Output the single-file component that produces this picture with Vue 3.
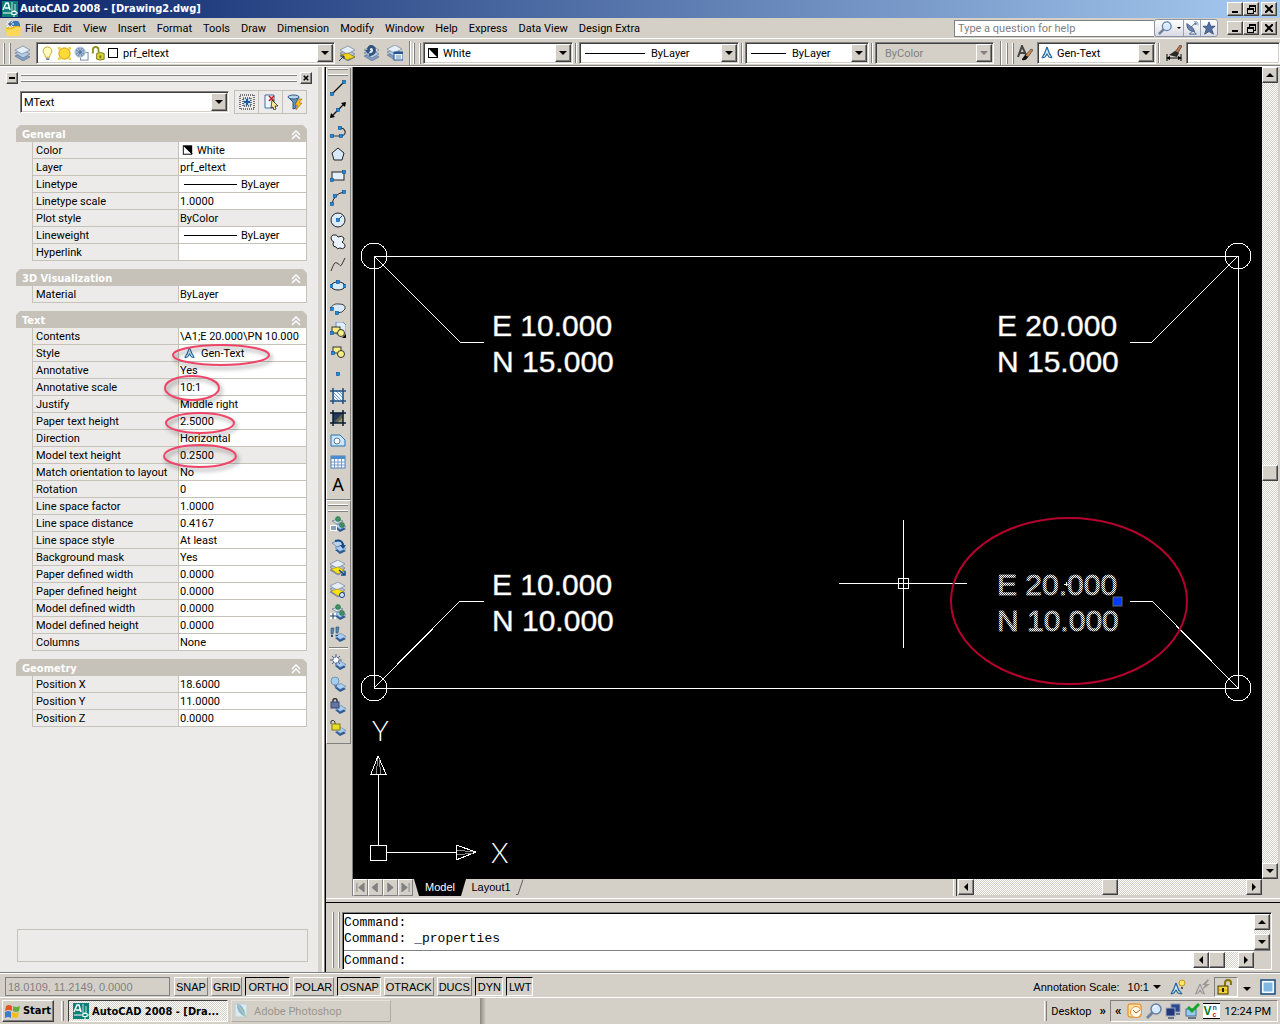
<script setup>
import { ref } from 'vue'

const sheets = (x = 0, y = 0) => `<g transform="translate(${x} ${y})" stroke="#5f7186" stroke-width=".6"><path d="M1 11l8-3 7 4-7 4z" fill="#7f9dc4"/><path d="M1 8l8-3 7 4-7 4z" fill="#b6cbe6"/><path d="M1 5l8-4 7 4-8 4z" fill="#e6eff9"/></g>`
const smallSheets = `<path d="M5 12l6-2 5 3-6 3z" fill="#2f5b94"/><path d="M5 9.500l6-2 5 3-6 3z" fill="#a9cdf3" stroke="#456d9d" stroke-width=".5"/>`
const ball = (x, y) => `<circle cx="${x}" cy="${y}" r="2.500" fill="#3f9160" stroke="#236340" stroke-width=".5"/>`
const dot = (x, y) => `<rect x="${x - 1.5}" y="${y - 1.5}" width="3" height="3" fill="#1b8ce0" stroke="#064b94" stroke-width=".6"/>`
const tri = (d, c = '#000') => `<path d="${d}" fill="${c}"/>`
const hashLines = '<path d="M3 0v16M13 0v16M0 3h16M0 13h16" stroke="#1d4f80" stroke-width="1.500" fill="none"/>'

const icons = {
  app: '<rect width="16" height="16" fill="#0d8076"/><path d="M1 9l3-7h2l2 7M3 7h4" stroke="#fff" stroke-width="1.500" fill="none"/><path d="M10 1v9M13 3v7" stroke="#bfe6df"/><path d="M1 12h8M12 9v7M9 12h7" stroke="#fff"/><rect x="10" y="10.500" width="4" height="3" fill="#0d8076" stroke="#fff"/>',
  file: '<path d="M5 1h8l2 3v7H5z" fill="#3c79b8"/><path d="M1 8l5-2h8l1 10H2z" fill="#f2b51d"/><path d="M1 9q6 1 8-1 3-2 7-1l-1 9H2z" fill="#ffd75a"/><path d="M5 0v8M1 4h8M2 1l6 6M8 1L2 7" stroke="#fff"/><path d="M5 2v4M3 4h4" stroke="#173e70"/>',
  layers: sheets(),
  bulb: '<path d="M8 1a4.500 4.500 0 0 1 3 8l-1 3H6l-1-3a4.500 4.500 0 0 1 3-8z" fill="#fffbc0" stroke="#c7a52c"/><path d="M6 13h4v2H7z" fill="#667b96"/>',
  sun: '<path d="M1 1h3v3H1zM12 1h3v3h-3zM1 12h3v3H1zM12 12h3v3h-3z" fill="#f4d545"/><circle cx="8" cy="8" r="6" fill="#ffda33" stroke="#c79616"/>',
  freeze: '<rect x="7" y="7" width="8" height="8" fill="#fff" stroke="#72879e"/><circle cx="6.500" cy="6.500" r="5.500" fill="#7896ba" stroke="#b8c8d8"/><path d="M6.500 1v11M1 6.500h11M3 3l7 7M10 3l-7 7" stroke="#d6e1ec" stroke-width=".8"/><circle cx="6.500" cy="6.500" r="2" fill="#55779f"/>',
  unlock: '<path d="M2 8V4q0-3 3-3t3 3v3" fill="none" stroke="#909322" stroke-width="2"/><path d="M6 8q4-2 8 0v6q-4 2-8 0z" fill="#dbd53c" stroke="#757817"/><path d="M9 10h2v3H9z" fill="#79751c"/>',
  layerPrev: sheets() + '<path d="M1 10l8-2 7 4-8 3z" fill="#f1d21c" stroke="#79680c" stroke-width=".6"/><path d="M0 16l5-5M2 11h3v3" stroke="#163668" fill="none"/>',
  layerBack: sheets() + '<path d="M6 10q7-1 5-7-4-4-6 2" fill="none" stroke="#31547f" stroke-width="3"/><path d="M2 5h6L5 9z" fill="#31547f"/>',
  layerState: sheets(-1, -1) + '<rect x="7" y="7" width="9" height="8" fill="#e8f3ff" stroke="#205995"/><path d="M7 8h9" stroke="#205995" stroke-width="2"/><path d="M9 11h5M9 13h5" stroke="#6f96bd"/>',
  swatch: '<rect x="3" y="3" width="10" height="10" fill="#000"/><path d="M4 4v8h8z" fill="#fff"/><path d="M5 4l8 8" stroke="#000"/>',
  textStyle: '<path d="M1 12L5 1l5 11M3 8h6" fill="none" stroke="#444" stroke-width="2"/><path d="M8 11l6-7 2 1-5 7z" fill="#ce8b50" stroke="#333" stroke-width=".6"/><path d="M5 14l3-4 3 2q-2 4-6 3z" fill="#111"/>',
  anno: '<path d="M8 3l3 8-3-2-3 2z" fill="#d6ecfb"/><path d="M8 2L5 10M8 2l3 8M3 13l3-1 2-3 2 3 3 1M3 13l2-4M13 13l-2-4" fill="none" stroke="#22679f" stroke-width="1.200"/>',
  dimStyle: '<path d="M1 9v7M15 9v7M2 13h12" stroke="#000"/><path d="M0 13l4-2v4zM16 13l-4-2v4z"/><path d="M9 7l5-7 2 1-4 7z" fill="#bd7145" stroke="#333" stroke-width=".6"/><path d="M3 10l6-4 4 2-2 4z" fill="#292929"/>',
  magnifier: '<path d="M7 9l-6 6" stroke="#72829c" stroke-width="3"/><circle cx="10" cy="6" r="5" fill="#d7e8ff" stroke="#6580aa" stroke-width="1.500"/><path d="M7 5q1-3 4-2" stroke="#fff" fill="none"/>',
  satellite: '<path d="M2 3q0 9 9 9L9 8 5 5z" fill="#6c82a9" stroke="#3f5c88"/><path d="M7 7l4-4M8 12l-3 3h8l-3-3" stroke="#3f5c88" fill="none"/><circle cx="12" cy="3" r="1.500" fill="#597bad"/><path d="M10 0q5 0 5 5" fill="none" stroke="#7890b8"/>',
  star: '<path d="M8 1l2 5h5l-4 3 2 6-5-3-5 3 2-6-4-3h5z" fill="#536d9e" stroke="#3b5380"/>',
  quick: '<rect x="1" y="1" width="14" height="14" fill="none" stroke="#000" stroke-dasharray="1 1"/><rect x="4" y="4" width="8" height="8" fill="#c0d9f0" stroke="#000" stroke-dasharray="1 1"/><path d="M8 5v6M5 8h6" stroke="#1c5ca0" stroke-width="2"/>',
  pick: '<path d="M2 1h9v13H2z" fill="#eef6ff" stroke="#40709d"/><path d="M6 2l5 5M11 2L6 7" stroke="#cc1720" stroke-width="1.500"/><path d="M9 6l6 6h-3l1 3-2 1-1-3-2 1z" fill="#ffe999" stroke="#111" stroke-width=".7"/>',
  filter: '<path d="M1 3h11L9 8v6l-3 1V8z" fill="#6592be" stroke="#285683"/><ellipse cx="6.500" cy="3" rx="5.500" ry="2" fill="#b8d5ec" stroke="#285683"/><path d="M12 5l-4 6h3l-2 5 6-7h-3l3-4z" fill="#ffc414" stroke="#9d6711" stroke-width=".6"/>',
  line: '<path d="M2 14L14 2" stroke="#111" stroke-width="1.200"/>' + dot(2, 14) + dot(14, 2),
  xline: '<path d="M1 15L15 1" stroke="#111" stroke-width="1.200"/>' + tri('M0 16l1-5 4 4zM16 0l-5 1 4 4z') + dot(8, 8),
  pline: '<path d="M2 12h9q5-1 4-5-1-3-5-3" stroke="#333" fill="none" stroke-width="1.200"/>' + dot(2, 12) + dot(11, 12) + dot(10, 4),
  polygon: '<path d="M8 2l6 5-2 7H4L2 7z" fill="#d8eafa" stroke="#222"/>',
  rect: '<rect x="2" y="4" width="12" height="8" fill="#e2f0ff" stroke="#222"/>' + dot(2, 12) + dot(14, 4),
  arc: '<path d="M2 15Q3 4 14 2" stroke="#222" fill="none"/>' + dot(2, 14) + dot(5, 6) + dot(14, 2),
  circle: '<circle cx="8" cy="8" r="7" fill="#dcecfb" stroke="#222"/><path d="M8 8l4-4" stroke="#064b94"/>' + dot(8, 8),
  cloud: '<path d="M3 1q4-1 5 2 4-2 6 1 0 3-2 4 4 2 3 5-2 3-5 1-3 2-4-1-3 0-3-3 0-1 1-2-3-1-3-4 0-2 2-3z" fill="#e9f1fb" stroke="#222"/>',
  spline: '<path d="M1 15C4 8 4 6 7 7s3 5 5 1l3-6" stroke="#333" fill="none"/>',
  ellipse: '<ellipse cx="8" cy="8" rx="7" ry="4" fill="#d9eaf8" stroke="#222"/>' + dot(1, 8) + dot(15, 8) + dot(8, 4),
  ellipseArc: '<path d="M1 9Q2 3 9 4q7 0 6 5-2 4-8 4" fill="#d9eaf8" stroke="#444"/>' + dot(2, 9) + dot(7, 13),
  insertBlock: '<path d="M6 0h7l3 3v9H6z" fill="#e0ecfa" stroke="#6b8db5"/><rect x="2" y="5" width="8" height="6" fill="#f7ef83" stroke="#333"/><circle cx="11" cy="11" r="3.500" fill="#f7ef83" stroke="#333"/><path d="M16 12v4h-4z"/>' + dot(2, 11),
  makeBlock: '<rect x="3" y="3" width="8" height="6" fill="#f7ef83" stroke="#333"/><circle cx="11" cy="10" r="3.500" fill="#f7ef83" stroke="#333"/>' + dot(3, 9),
  point: dot(8, 8),
  hatch: '<rect x="3" y="3" width="10" height="10" fill="#eef6ff"/><path d="M3 10l3 3M3 7l6 6M3 4l9 9M6 3l7 7M9 3l4 4" stroke="#438ac6" stroke-width=".8"/>' + hashLines,
  gradient: '<rect x="3" y="3" width="10" height="10" fill="#5d6552"/><path d="M3 3h10L3 13z" fill="#29395c"/><path d="M13 7v6H7z" fill="#a09a72"/>' + hashLines.replace('#1d4f80', '#081c34'),
  region: '<path d="M1 3h9l5 5v6H1z" fill="#cee5fa" stroke="#2470b1"/><circle cx="7" cy="9" r="3" fill="#fff" stroke="#557e9f"/>',
  table: '<rect x="1" y="2" width="14" height="12" fill="#fff" stroke="#4c7cb5"/><rect x="1" y="2" width="14" height="3" fill="#4c8ccd"/><path d="M1 8h14M1 11h14M4.500 5v9M8 5v9M11.500 5v9" stroke="#7599c7"/>',
  isolate: smallSheets + '<path d="M2 5l6-2 5 2-6 3z" fill="#cfe0ef" stroke="#456" stroke-width=".5"/>' + ball(8, 3) + ball(12, 9) + '<path d="M0 9h7v6H0z" fill="#fff"/><path d="M1 11h5M1 13h5" stroke="#133c78"/>',
  turnLayer: smallSheets + '<path d="M2 5l7-3 5 4-7 3z" fill="#b8d2ef" stroke="#456" stroke-width=".5"/><path d="M5 3q8-2 8 5" fill="none" stroke="#164a85" stroke-width="2"/><path d="M10 7h6l-3 4z" fill="#164a85"/>',
  copyLayer: sheets(-1, -1) + '<path d="M1 9l7-2 6 3-6 4z" fill="#ffe211" stroke="#8a790c" stroke-width=".5"/><path d="M9 10l6 5M15 11v4h-4" stroke="#144b8a" stroke-width="1.500" fill="none"/>',
  matchLayer: sheets(-1, -1) + '<path d="M1 9l7-2 6 3-6 4z" fill="#ffe211" stroke="#8a790c" stroke-width=".5"/><circle cx="12" cy="13" r="2.500" fill="#d7e9ff" stroke="#173d75"/>',
  addLayer: smallSheets + '<path d="M2 5l6-2 5 2-6 3z" fill="#cfe0ef" stroke="#456" stroke-width=".5"/>' + ball(8, 3) + ball(12, 9) + '<path d="M0 9h6v6H0z" fill="#fff"/><path d="M3 9v6M0 12h6" stroke="#133c78"/>',
  walk: smallSheets + '<path d="M1 2h3l-1 6H1zM6 1h3l-1 6H6z" fill="#5c88ad" stroke="#234e75" stroke-width=".6"/><path d="M1 9h2v2H1zM6 9h2v1H6z" fill="#234e75"/>',
  frost: smallSheets + '<path d="M6 0v12M0 6h12M2 2l8 8M10 2l-8 8" stroke="#48658c"/><circle cx="6" cy="6" r="3" fill="#fff" stroke="#48658c" stroke-dasharray="2 1"/>',
  off: smallSheets + '<circle cx="5" cy="5" r="4" fill="#a7cdeb" stroke="#6d96b9"/><path d="M4 9h3v3H5z" fill="#587c9d"/>',
  lock: smallSheets + '<path d="M3 5V2q2-3 4 0v3" fill="none" stroke="#333" stroke-width="1.500"/><rect x="1" y="4" width="8" height="6" fill="#6575a3" stroke="#3b4772"/>',
  unlocked: smallSheets + '<path d="M1 4V1q3-2 4 1v3" fill="none" stroke="#333"/><rect x="2" y="4" width="8" height="6" fill="#e7df27" stroke="#817a13"/>',
  annoVis: '<path d="M6 5l4 9-4-3-4 3z" fill="#d6ecfb"/><path d="M6 4L3 12M6 4l3 8M1 15l3-1 2-3 2 3 4 1M1 15l2-4M12 15l-3-4" fill="none" stroke="#22679f" stroke-width="1.200"/><circle cx="12" cy="4" r="3" fill="#ffe66b" stroke="#c79616"/><path d="M11 8h2v2h-2z" fill="#555"/>',
  annoAuto: '<path d="M6 5L2 14M6 5l4 9M1 15l3-1 2-3 2 3 3 1" fill="none" stroke="#999" stroke-width="1.200"/><path d="M14 0L8 6h3l-3 5 8-6h-4l3-4z" fill="#999"/>',
  padlock: '<path d="M8 7V4q0-3 3-3t3 3v2" fill="none" stroke="#8a7400" stroke-width="2"/><rect x="1" y="7" width="10" height="8" fill="#e0bd18" stroke="#4c4000"/><path d="M2 9h8M2 13h8" stroke="#fff17a"/><path d="M5 9h2v4H5z" fill="#222"/>',
  clean: '<rect x="1" y="1" width="14" height="14" fill="#eaf6ff" stroke="#164a82" stroke-width="1.500"/><rect x="3" y="3" width="10" height="10" fill="#7fb8e3" stroke="#fff"/>',
  windows: '<path d="M1 3q3-2 6 0v5Q4 6 0 8z" fill="#e85422"/><path d="M8 3q3 2 7 0l-1 5q-3 2-6 0z" fill="#61b136"/><path d="M0 9q4-2 6 0v6q-3-2-6 0z" fill="#3f79d2"/><path d="M7 9q4 2 7 0l-1 5q-3 2-6 0z" fill="#f3bd22"/>',
  feather: '<rect x="1" y="1" width="12" height="13" fill="#dce9ee" stroke="#c0ccd0"/><path d="M3 1q7 0 9 13Q2 10 3 1z" fill="#8ab8cf"/><path d="M4 2l9 13" stroke="#b9d495"/>',
  clock: '<rect x="1" y="1" width="13" height="13" rx="2" fill="#ffe3a4" stroke="#e17e13"/><circle cx="9" cy="9" r="5.500" fill="#fff9e8" stroke="#e9902f"/><path d="M6 7l3 3 4-3" fill="none" stroke="#ac6424"/>',
  monitors: '<rect x="6" y="1" width="9" height="8" fill="#2d468e" stroke="#8c9bb8"/><rect x="1" y="5" width="9" height="8" fill="#20377b" stroke="#9faabe"/><path d="M3 15h6M11 11h4" stroke="#6b758a" stroke-width="2"/>',
  safe: '<rect x="2" y="6" width="10" height="7" fill="#9ccbf1" stroke="#456b91"/><path d="M4 15h8" stroke="#67758a" stroke-width="2"/><path d="M4 4l4 4 7-7" stroke="#16a62c" stroke-width="3" fill="none"/>',
}

const menus = ['File', 'Edit', 'View', 'Insert', 'Format', 'Tools', 'Draw', 'Dimension', 'Modify', 'Window', 'Help', 'Express', 'Data View', 'Design Extra']
const drawTools = ['line', 'xline', 'pline', 'polygon', 'rect', 'arc', 'circle', 'cloud', 'spline', 'ellipse', 'ellipseArc', 'insertBlock', 'makeBlock', 'point', 'hatch', 'gradient', 'region', 'table']
const layerTools = ['isolate', 'turnLayer', 'copyLayer', 'matchLayer', 'addLayer', 'walk']
const layerTools2 = ['frost', 'off', 'lock', 'unlocked']
const sections = [
  { title: 'General', rows: [['Color', 'White', 'swatch'], ['Layer', 'prf_eltext'], ['Linetype', 'ByLayer', 'line'], ['Linetype scale', '1.0000'], ['Plot style', 'ByColor', 'locked'], ['Lineweight', 'ByLayer', 'line'], ['Hyperlink', '']] },
  { title: '3D Visualization', rows: [['Material', 'ByLayer']] },
  { title: 'Text', rows: [['Contents', '\\A1;E 20.000\\PN 10.000'], ['Style', 'Gen-Text', 'anno'], ['Annotative', 'Yes'], ['Annotative scale', '10:1'], ['Justify', 'Middle right'], ['Paper text height', '2.5000'], ['Direction', 'Horizontal'], ['Model text height', '0.2500', 'locked'], ['Match orientation to layout', 'No'], ['Rotation', '0'], ['Line space factor', '1.0000'], ['Line space distance', '0.4167'], ['Line space style', 'At least'], ['Background mask', 'Yes'], ['Paper defined width', '0.0000'], ['Paper defined height', '0.0000'], ['Model defined width', '0.0000'], ['Model defined height', '0.0000'], ['Columns', 'None']] },
  { title: 'Geometry', rows: [['Position X', '18.6000'], ['Position Y', '11.0000'], ['Position Z', '0.0000']] },
]
const modes = [['SNAP', 0], ['GRID', 0], ['ORTHO', 1], ['POLAR', 0], ['OSNAP', 1], ['OTRACK', 0], ['DUCS', 0], ['DYN', 1], ['LWT', 1]]
const question = ref('')
const command = ref('')
</script>

<template>
  <div class="app">
    <header class="title">
      <svg class="ic" viewBox="0 0 16 16" v-html="icons.app" />
      <h1>AutoCAD 2008 - [Drawing2.dwg]</h1>
      <div class="winbtns">
        <button class="btn" aria-label="Minimize"><i class="min" /></button>
        <button class="btn" aria-label="Restore"><svg class="restore" viewBox="0 0 10 10"><path d="M3 4V1H9V7H7M3 1H9M1 4H7V9H1ZM1 5H7M3 2H9" /></svg></button>
        <button class="btn close" aria-label="Close"><svg viewBox="0 0 8 8"><path d="M0 0l8 8M8 0L0 8" /></svg></button>
      </div>
    </header>

    <nav class="menu">
      <svg class="ic" viewBox="0 0 16 16" v-html="icons.file" />
      <a v-for="m in menus" :key="m" href="#">{{ m }}</a>
      <input v-model="question" class="help" aria-label="Help search" placeholder="Type a question for help">
      <div class="helpbtns">
        <button class="wide" aria-label="Search"><svg class="ic" viewBox="0 0 16 16" v-html="icons.magnifier" /><i class="down small" /></button>
        <button aria-label="Communication Center"><svg class="ic" viewBox="0 0 16 16" v-html="icons.satellite" /></button>
        <button aria-label="Favorites"><svg class="ic" viewBox="0 0 16 16" v-html="icons.star" /></button>
      </div>
      <div class="winbtns">
        <button class="btn" aria-label="Minimize drawing"><i class="min" /></button>
        <button class="btn" aria-label="Restore drawing"><svg class="restore" viewBox="0 0 10 10"><path d="M3 4V1H9V7H7M3 1H9M1 4H7V9H1ZM1 5H7M3 2H9" /></svg></button>
        <button class="btn close" aria-label="Close drawing"><svg viewBox="0 0 8 8"><path d="M0 0l8 8M8 0L0 8" /></svg></button>
      </div>
    </nav>

    <div class="toolbar">
      <i class="grip" />
      <button class="tool" aria-label="Layer Properties"><svg class="ic" viewBox="0 0 16 16" v-html="icons.layers" /></button>
      <div class="combo layer">
        <svg v-for="n in ['bulb', 'sun', 'freeze', 'unlock']" :key="n" class="ic" viewBox="0 0 16 16" v-html="icons[n]" />
        <i class="box" />
        <select aria-label="Layer"><option>prf_eltext</option></select>
        <span class="btn arrow"><i class="down" /></span>
      </div>
      <button v-for="n in ['layerPrev', 'layerBack', 'layerState']" :key="n" class="tool" :aria-label="n"><svg class="ic" viewBox="0 0 16 16" v-html="icons[n]" /></button>
      <i class="brk" /><i class="grip" />
      <div class="combo color">
        <svg class="ic" viewBox="0 0 16 16" v-html="icons.swatch" />
        <select aria-label="Color"><option>White</option></select>
        <span class="btn arrow"><i class="down" /></span>
      </div>
      <i class="sep" />
      <div class="combo ltype">
        <i class="rule" />
        <select aria-label="Linetype"><option>ByLayer</option></select>
        <span class="btn arrow"><i class="down" /></span>
      </div>
      <i class="sep" />
      <div class="combo lweight">
        <i class="rule short" />
        <select aria-label="Lineweight"><option>ByLayer</option></select>
        <span class="btn arrow"><i class="down" /></span>
      </div>
      <i class="sep" />
      <div class="combo plot off">
        <select aria-label="Plot style" disabled><option>ByColor</option></select>
        <span class="btn arrow"><i class="down" /></span>
      </div>
      <i class="brk wide" /><i class="grip" />
      <button class="tool" aria-label="Text style"><svg class="ic" viewBox="0 0 16 16" v-html="icons.textStyle" /></button>
      <div class="combo tstyle">
        <svg class="ic" viewBox="0 0 16 16" v-html="icons.anno" />
        <select aria-label="Text style"><option>Gen-Text</option></select>
        <span class="btn arrow"><i class="down" /></span>
      </div>
      <i class="sep" />
      <button class="tool" aria-label="Dimension style"><svg class="ic" viewBox="0 0 16 16" v-html="icons.dimStyle" /></button>
      <div class="combo rest"><select aria-label="Dimension style"><option /></select></div>
    </div>

    <main>
      <aside class="props">
        <div class="props-in">
          <div class="cap">
            <button class="btn" aria-label="Minimize palette"><i class="dash" /></button>
            <i class="bars" />
            <button class="btn close" aria-label="Close palette"><svg viewBox="0 0 8 8"><path d="M1 1l6 6M7 1L1 7" /></svg></button>
          </div>
          <div class="picker">
            <div class="combo obj">
              <select aria-label="Object type"><option>MText</option></select>
              <span class="btn arrow"><i class="down" /></span>
            </div>
            <div class="pick">
              <button v-for="n in ['quick', 'pick', 'filter']" :key="n" :aria-label="n"><svg class="ic" viewBox="0 0 16 16" v-html="icons[n]" /></button>
            </div>
          </div>
          <section v-for="s in sections" :key="s.title">
            <h2>{{ s.title }}
              <svg class="chev" viewBox="0 0 10 10"><path d="M1 5l4-4 4 4M1 9l4-4 4 4" /></svg>
            </h2>
            <table>
              <tbody>
                <tr v-for="[k, v, kind] in s.rows" :key="k">
                  <th scope="row">{{ k }}</th>
                  <td :class="kind">
                    <div>
                      <svg v-if="kind === 'swatch' || kind === 'anno'" class="ic" viewBox="0 0 16 16" v-html="icons[kind]" />
                      <i v-if="kind === 'line'" class="rule" />
                      <span>{{ v }}</span>
                    </div>
                  </td>
                </tr>
              </tbody>
            </table>
            <svg v-if="s.title === 'Text'" class="marks" viewBox="0 0 292 180">
              <ellipse cx="205" cy="44" rx="48" ry="10" />
              <ellipse cx="176" cy="77" rx="27" ry="12" />
              <ellipse cx="184" cy="112" rx="34" ry="10" />
              <ellipse cx="184" cy="145" rx="36" ry="11" />
            </svg>
          </section>
          <div class="desc" />
        </div>
      </aside>

      <div class="work">
        <div class="upper">
          <div class="tools">
            <div class="strip">
              <i class="hgrip" />
              <button v-for="n in drawTools" :key="n" :aria-label="n"><svg class="ic" viewBox="0 0 16 16" v-html="icons[n]" /></button>
              <button class="mtext">A</button>
            </div>
            <div class="strip second">
              <i class="hgrip" />
              <button v-for="n in layerTools" :key="n" :aria-label="n"><svg class="ic" viewBox="0 0 16 16" v-html="icons[n]" /></button>
              <i class="hsep" />
              <button v-for="n in layerTools2" :key="n" :aria-label="n"><svg class="ic" viewBox="0 0 16 16" v-html="icons[n]" /></button>
            </div>
          </div>
          <div class="doc">
            <div class="view">
              <svg class="canvas">
                <defs>
                  <pattern id="dither" width="2" height="2" patternUnits="userSpaceOnUse">
                    <rect width="2" height="2" fill="#444" />
                    <rect width="1" height="1" fill="#fff" /><rect x="1" y="1" width="1" height="1" fill="#fff" />
                  </pattern>
                </defs>
                <g class="wire">
                  <path d="M21 189H885V621H21Z" />
                  <path d="M21 189L107 275H131M885 189L799 275H777M21 621L107 534H131M885 621L799 534H777" />
                  <circle cx="21" cy="189" r="13" /><circle cx="885" cy="189" r="13" />
                  <circle cx="21" cy="621" r="13" /><circle cx="885" cy="621" r="13" />
                  <path d="M486 516H614M550 453V581M545 511H555V521H545Z" />
                  <path d="M17 778H33V793H17ZM25 778V707M18 707L25 689L33 707ZM33 785H103M103 778L123 785L103 793Z" />
                  <path class="faint" d="M23 707L25 692M28 707L26 692M104 783L120 785M104 788L120 786" />
                  <path d="M711 517H715M713 515V519" />
                </g>
                <g class="label">
                  <text x="139" y="269">E 10.000</text><text x="139" y="305">N 15.000</text>
                  <text x="644" y="269">E 20.000</text><text x="644" y="305">N 15.000</text>
                  <text x="139" y="528">E 10.000</text><text x="139" y="564">N 10.000</text>
                  <text class="sel" x="644" y="528">E 20.000</text><text class="sel" x="644" y="564">N 10.000</text>
                </g>
                <text class="axis" x="19" y="674">Y</text>
                <text class="axis" x="138" y="796">X</text>
                <ellipse class="halo" cx="716" cy="534" rx="118" ry="83" />
                <rect class="knob" x="760" y="530" width="9" height="9" />
              </svg>
              <div class="vs">
                <button class="btn" aria-label="Scroll up"><i class="up" /></button>
                <i class="btn thumb" />
                <button class="btn" aria-label="Scroll down"><i class="down" /></button>
              </div>
            </div>
            <div class="tabs">
              <button v-for="(d, i) in ['M1 0v10M9 0v10L3 5z', 'M7 0v10L1 5z', 'M2 0v10l6-5z', 'M9 0v10M1 0v10l6-5z']" :key="i" class="nav" :aria-label="'Tab scroll ' + (i + 1)"><svg viewBox="0 0 10 10"><path :d="d" /></svg></button>
              <button class="tab on">Model</button>
              <button class="tab">Layout1</button>
              <svg class="slash" viewBox="0 0 8 16"><path d="M7 0L2 15H0" /></svg>
              <i class="split" />
              <div class="hs">
                <button class="btn" aria-label="Scroll left"><i class="left" /></button>
                <i class="btn thumb" />
                <button class="btn" aria-label="Scroll right"><i class="right" /></button>
              </div>
            </div>
          </div>
        </div>

        <div class="cmd">
          <i class="grip" />
          <div class="cmdbox">
            <div class="hist">
              <pre>Command:
Command: _properties</pre>
              <div class="vs">
                <button class="btn" aria-label="History up"><i class="up" /></button>
                <button class="btn" aria-label="History down"><i class="down" /></button>
              </div>
            </div>
            <div class="entry">
              <label for="cmdline">Command:</label>
              <input id="cmdline" v-model="command">
              <div class="hs">
                <button class="btn" aria-label="Command left"><i class="left" /></button>
                <i class="btn thumb" />
                <button class="btn" aria-label="Command right"><i class="right" /></button>
              </div>
            </div>
          </div>
        </div>
      </div>
    </main>

    <footer class="status">
      <output class="coords">18.0109, 11.2149, 0.0000</output>
      <button v-for="[m, on] in modes" :key="m" class="mode" :class="{ on }">{{ m }}</button>
      <span class="scale">Annotation Scale:</span>
      <button class="plain">10:1 <i class="down" /></button>
      <svg class="ic vis" viewBox="0 0 16 16" v-html="icons.annoVis" />
      <svg class="ic auto" viewBox="0 0 16 16" v-html="icons.annoAuto" />
      <button class="lockbtn" aria-label="Toolbar lock"><svg class="ic" viewBox="0 0 16 16" v-html="icons.padlock" /></button>
      <i class="down tray-arrow" />
      <svg class="ic" viewBox="0 0 16 16" v-html="icons.clean" />
    </footer>

    <footer class="taskbar">
      <button class="btn start"><svg class="ic" viewBox="0 0 16 16" v-html="icons.windows" />Start</button>
      <i class="tgrip" />
      <button class="task active"><svg class="ic" viewBox="0 0 16 16" v-html="icons.app" /><span>AutoCAD 2008 - [Dra...</span></button>
      <button class="task ghost"><svg class="ic" viewBox="0 0 16 16" v-html="icons.feather" /><span>Adobe Photoshop</span></button>
      <i class="edge" />
      <i class="tgrip end" />
      <span class="desk">Desktop</span>
      <b class="more">»</b>
      <div class="tray">
        <b>«</b>
        <svg v-for="n in ['clock', 'magnifier', 'monitors', 'safe']" :key="n" class="ic" viewBox="0 0 16 16" v-html="icons[n]" />
        <span class="vnc"><b>V</b><small><em>n</em><em>c</em></small></span>
        <time>12:24 PM</time>
      </div>
    </footer>
  </div>
</template>

<style>
body { margin: 0; background: #d4d0c8; }
</style>

<style scoped>
* { box-sizing: border-box; }
.app {
  --face: #d4d0c8;
  --ui: Roboto, "Noto Sans", sans-serif;
  --sys: "Liberation Sans", Arial, sans-serif;
  display: flex; flex-direction: column; min-height: 100vh;
  background: var(--face); color: #000; font: 11px/14px var(--ui); overflow: hidden;
}
button, input, select { font: inherit; color: inherit; margin: 0; padding: 0; border: 0; background: none; border-radius: 0; }
i, em { font-style: normal; }
.ic { width: 16px; height: 16px; flex: none; display: block; }
.btn {
  display: flex; align-items: center; justify-content: center; flex: none;
  width: 16px; height: 16px; background: var(--face);
  border: 1px solid; border-color: #fff #404040 #404040 #fff;
  box-shadow: inset -1px -1px #808080;
}
.down, .up, .left, .right { width: 0; height: 0; border: 4px solid transparent; flex: none; }
.down { border-top-color: #000; border-bottom: 0; }
.up { border-bottom-color: #000; border-top: 0; }
.left { border-right-color: #000; border-left: 0; }
.right { border-left-color: #000; border-right: 0; }
.down.small { border-width: 2px 2px 0; }

.title { display: flex; align-items: center; height: 18px; padding: 0 3px 0 2px; background: linear-gradient(90deg, #0a246a, #a6caf0); color: #fff; }
.title h1 { flex: 1; margin: 0 0 0 2px; font: bold 11px/18px "DejaVu Sans Condensed", var(--ui); white-space: nowrap; }
.winbtns { display: flex; flex: none; }
.winbtns .btn { height: 14px; }
.winbtns .close { margin-left: 2px; }
.close svg { width: 8px; height: 8px; }
.close path { stroke: #000; stroke-width: 2; fill: none; }
.min { width: 6px; height: 8px; border-bottom: 2px solid #000; }
.restore { width: 10px; height: 10px; flex: none; shape-rendering: crispEdges; }
.restore path { fill: none; stroke: #000; }

.menu { display: flex; align-items: center; height: 20px; padding: 0 3px 0 5px; gap: 11px; white-space: nowrap; }
.menu .ic { margin-right: -7px; }
.menu a { color: #000; text-decoration: none; padding-top: 2px; }
.help { flex: none; width: 200px; height: 17px; margin-left: auto; padding: 1px 3px 0; background: #fff; border: 1px solid #808080; border-right: 0; }
.help::placeholder { color: #808080; opacity: 1; }
.helpbtns { display: flex; margin: 0 -2px 0 -11px; height: 18px; border: 1px solid #8b93a5; border-radius: 3px; background: linear-gradient(#fff, #d8dbe4); }
.helpbtns button { display: flex; align-items: center; justify-content: center; width: 17px; }
.helpbtns button + button { border-left: 1px solid #9aa1b0; }
.helpbtns .wide { width: 28px; gap: 5px; }
.helpbtns .ic { width: 14px; height: 14px; margin: 0; }

.toolbar { display: flex; align-items: center; height: 28px; padding: 2px 0 0 3px; border-top: 1px solid #fff; border-bottom: 1px solid #808080; white-space: nowrap; }
.grip { flex: none; width: 7px; height: 21px; border: solid #fff; border-width: 0 1px; box-shadow: 1px 0 #808080, inset 1px 0 #808080; }
.tool { flex: none; display: flex; align-items: center; justify-content: center; width: 24px; height: 22px; }
.brk { flex: none; align-self: stretch; width: 2px; margin: 0 2px; border-left: 1px solid #808080; background: #fff; }
.brk.wide { margin: 0 4px 0 6px; }
.sep { flex: none; width: 2px; height: 20px; margin: 0 2px; border-left: 1px solid #808080; background: #fff; }
.combo { display: flex; align-items: center; flex: none; height: 22px; padding: 1px; background: #fff; border: 1px solid; border-color: #808080 #fff #fff #808080; box-shadow: inset 1px 1px #404040, inset -1px -1px var(--face); }
.combo select { appearance: none; flex: 1; min-width: 0; height: 18px; line-height: 16px; padding: 2px 0 0 2px; opacity: 1; }
.combo .arrow { align-self: stretch; height: auto; pointer-events: none; }
.combo .box { width: 10px; height: 10px; border: 1px solid #000; margin-right: 3px; }
.combo.layer { width: 299px; padding-left: 3px; margin-left: 2px; }
.combo.layer .ic { margin-right: 2px; width: 15px; height: 15px; }
.combo.color { width: 150px; margin-left: 3px; }
.combo.ltype { width: 160px; }
.combo.lweight { width: 124px; }
.combo.plot { width: 119px; background: var(--face); color: #808080; }
.combo.plot select { padding-left: 8px; }
.combo.plot .down { border-top-color: #808080; }
.combo.tstyle { width: 119px; }
.combo.rest { flex: 1; }
.rule { flex: none; width: 60px; height: 1px; margin: 0 4px; background: #000; }
.rule.short { width: 35px; }

main { flex: 1; display: flex; min-height: 0; border-top: 1px solid #fff; }
.props { flex: none; width: 326px; padding-right: 4px; border-right: 1px solid #000; box-shadow: inset -1px 0 #808080, inset -3px 0 #fff; background: var(--face); }
.props-in { display: flex; flex-direction: column; height: 100%; width: 318px; padding: 5px 11px 10px 16px; background: #ecebe9; }
.cap { display: flex; align-items: center; margin: 0 -5px 0 -10px; gap: 3px; height: 11px; }
.cap .btn { width: 12px; height: 12px; }
.cap svg { width: 6px; height: 6px; }
.bars { flex: 1; height: 7px; border: solid #fff; border-width: 1px 0; box-shadow: 0 1px #808080, inset 0 1px #808080; }
.dash { width: 6px; height: 2px; background: #000; }
.picker { display: flex; align-items: center; margin: 7px 0 11px; }
.combo.obj { width: 209px; margin-left: 4px; }
.pick { display: flex; margin-left: auto; border: 1px solid #c4c0b8; }
.pick button { display: flex; align-items: center; justify-content: center; width: 24px; height: 22px; }
.pick button:first-child { width: 23px; }
.pick button + button { border-left: 1px solid #c4c0b8; }
.props section { position: relative; margin-bottom: 8px; }
.props h2 { display: flex; justify-content: space-between; align-items: center; height: 17px; margin: 0; padding: 3px 6px 0; background: #c6c2ba; color: #fff; font: bold 11px/14px "DejaVu Sans Condensed", var(--ui); clip-path: polygon(0 4px, 4px 0, calc(100% - 4px) 0, 100% 4px, 100% 100%, 0 100%); }
.chev { width: 10px; height: 10px; }
.chev path { fill: none; stroke: #fff; stroke-width: 1.500; }
table { width: calc(100% - 16px); margin-left: 16px; border-spacing: 0; table-layout: fixed; border-left: 1px solid #c6c2ba; border-right: 1px solid #c6c2ba; }
th, td { height: 17px; padding: 0; border-bottom: 1px solid #c6c2ba; font-weight: 400; text-align: left; line-height: 14px; white-space: nowrap; }
th { width: 145px; padding: 2px 0 0 3px; }
td { border-left: 1px solid #c6c2ba; background: #fff; overflow: hidden; }
td > div { display: flex; align-items: center; height: 16px; padding-left: 1px; }
td span { padding-top: 2px; }
td.locked { background: #ecebe9; }
td .rule { width: 53px; }
td .ic { width: 15px; margin-right: 2px; }
td.anno .ic { margin: 0 4px 0 2px; }
.marks { position: absolute; left: 0; top: 0; width: 292px; height: 180px; pointer-events: none; filter: drop-shadow(2px 3px 2px #0006); }
.marks ellipse { fill: none; stroke: #ee4468; stroke-width: 2; }
.desc { height: 33px; margin: auto -1px 0 1px; border: 1px solid #c6c2ba; }

.work { flex: 1; min-width: 0; display: flex; flex-direction: column; }
.upper { flex: 1; display: flex; min-height: 0; padding-bottom: 2px; }
.tools { flex: none; width: 27px; border-right: 1px solid #808080; }
.strip { width: 25px; padding-bottom: 4px; border-right: 1px solid #808080; border-bottom: 1px solid #808080; border-left: 1px solid #fff; }
.strip.second { border-top: 1px solid #fff; padding-top: 2px; }
.strip button { display: flex; align-items: center; justify-content: center; width: 22px; height: 22px; }
.hgrip { display: block; width: 20px; height: 7px; margin: 1px 1px 2px; border: solid #fff; border-width: 1px 0; box-shadow: 0 1px #808080, inset 0 1px #808080; }
.hsep { display: block; height: 2px; margin: 2px 2px; border-top: 1px solid #808080; background: #fff; }
.strip .mtext { font: 18px/22px "Noto Sans", sans-serif; }
.doc { flex: 1; min-width: 0; display: flex; flex-direction: column; }
.view { flex: 1; display: flex; min-height: 0; }
.canvas { flex: 1; min-width: 0; height: 100%; background: #000; }
.wire { fill: none; stroke: #fff; stroke-width: 1; shape-rendering: crispEdges; }
.wire .faint { stroke: #888; }
.label { font: 30px var(--sys); fill: #fff; stroke: #fff; stroke-opacity: 0.4; }
.label .sel { fill: url(#dither); stroke: url(#dither); stroke-opacity: 0.8; }
.axis { font: 300 28px Lato, var(--sys); fill: #fff; }
.halo { fill: none; stroke: #b4002c; stroke-width: 2; }
.knob { fill: #003cff; stroke: #666; }
.vs, .hs { flex: none; display: flex; justify-content: space-between; background: repeating-conic-gradient(#fff 0 25%, #d4d0c8 0 50%) 0 0 / 2px 2px; }
.vs { flex-direction: column; width: 16px; }
.view .vs { margin-right: 2px; }
.tabs { display: flex; height: 17px; margin-right: 18px; }
.nav { flex: none; display: flex; align-items: center; justify-content: center; width: 15px; border: 1px solid; border-color: #fff #808080 #808080 #fff; }
.nav svg { width: 9px; height: 9px; }
.nav path { fill: #808080; stroke: #808080; }
.tab { flex: none; width: 44px; margin-left: 3px; font: 11px/17px var(--sys); }
.tab.on { width: 52px; background: #000; color: #fff; clip-path: polygon(0 0, 100% 0, calc(100% - 5px) 100%, 5px 100%); margin-left: 1px; }
.slash { width: 8px; height: 17px; margin-left: 3px; }
.slash path { fill: none; stroke: #606060; }
.split { width: 4px; margin-left: auto; border-right: 1px solid #404040; border-left: 1px solid #fff; }
.tabs .hs { width: 304px; height: 16px; margin-left: 1px; }
.hs .thumb { height: auto; }

.cmd { flex: none; display: flex; height: 74px; padding: 13px 8px 2px 6px; border-top: 1px solid #fff; background: linear-gradient(#000, #000) 0 3px / 100% 1px no-repeat; }
.cmd .grip { height: 56px; margin-right: 3px; }
.cmdbox { flex: 1; min-width: 0; display: flex; flex-direction: column; border: 1px solid; border-color: #808080 #fff #fff #808080; box-shadow: inset 1px 1px #000; padding: 1px 0 0 1px; }
.cmdbox pre, .entry label, .entry input { font: 13px/16px "Liberation Mono", "Courier New", monospace; }
.hist { display: flex; justify-content: space-between; height: 38px; background: #fff; border-bottom: 1px solid #808080; margin-right: 1px; }
.hist pre { margin: 1px 0 0; }
.entry { flex: 1; display: flex; align-items: center; margin-right: 17px; background: #fff; }
.entry label { padding-top: 2px; }
.entry input { flex: 1; min-width: 0; outline: 0; }
.entry .hs { width: 61px; justify-content: flex-start; }
.entry .hs .btn:last-child { margin-left: auto; }

.status { flex: none; display: flex; align-items: center; height: 26px; padding: 2px 4px 0 5px; border-top: 1px solid #808080; box-shadow: inset 0 1px #fff, inset 0 -1px #fff; font: 11px/16px var(--sys); white-space: nowrap; }
.coords { width: 165px; height: 19px; margin-right: 4px; padding: 1px 2px; color: #808080; border: 1px solid #808080; }
.mode { height: 19px; margin-right: 3px; padding: 0 1px; border: 1px solid; border-color: #fff #808080 #808080 #fff; }
.mode.on { border-color: #000 #fff #fff #000; padding: 1px 1px 0 2px; }
.scale { margin-left: auto; margin-right: 8px; }
.plain { display: flex; align-items: center; gap: 4px; margin-right: 9px; }
.auto { margin: 0 4px 0 8px; }
.lockbtn { width: 24px; height: 20px; padding-left: 2px; border: 1px solid; border-color: #808080 #fff #fff #808080; }
.tray-arrow { margin: 4px 9px 0 5px; }

.taskbar { flex: none; display: flex; align-items: center; height: 26px; padding: 0 2px; white-space: nowrap; }
.start { width: 52px; height: 22px; gap: 2px; font: bold 11px/16px "DejaVu Sans Condensed", var(--ui); }
.tgrip { width: 3px; height: 20px; margin: 0 4px 0 7px; border-left: 1px solid #fff; border-right: 1px solid #808080; }
.task { display: flex; align-items: center; gap: 3px; width: 160px; height: 22px; padding: 0 4px; margin-right: 3px; border: 1px solid; }
.task.active { border-color: #404040 #fff #fff #404040; background: repeating-conic-gradient(#fff 0 25%, #d4d0c8 0 50%) 0 0 / 2px 2px; font: bold 11px/16px "DejaVu Sans Condensed", var(--ui); }
.task.ghost { border-color: #e4e1dc #b0aca4 #b0aca4 #e4e1dc; color: #9a968e; padding-left: 2px; gap: 4px; }
.task span { padding-top: 1px; }
.edge { align-self: stretch; width: 6px; margin-left: 86px; background: linear-gradient(90deg, #8c8880, #d4d0c8); }
.tgrip.end { margin-left: auto; }
.desk { margin-right: 8px; padding-top: 1px; }
.more { margin-right: 4px; font-size: 13px; }
.tray { display: flex; align-items: center; gap: 3px; width: 168px; height: 22px; padding-left: 4px; border: 1px solid; border-color: #808080 #fff #fff #808080; }
.tray > b { font-size: 13px; margin-right: 2px; }
.vnc { display: flex; width: 17px; height: 16px; padding-left: 1px; background: #fff; border: solid #000; border-width: 1px 0; font: 12px/14px var(--sys); color: #0a7a1e; }
.vnc small { display: flex; flex-direction: column; font: bold 7px/7px var(--sys); color: #1b4fd0; margin-left: 1px; }
.vnc em + em { color: #d02020; }
.tray time { margin-left: 2px; padding-top: 1px; }
</style>
